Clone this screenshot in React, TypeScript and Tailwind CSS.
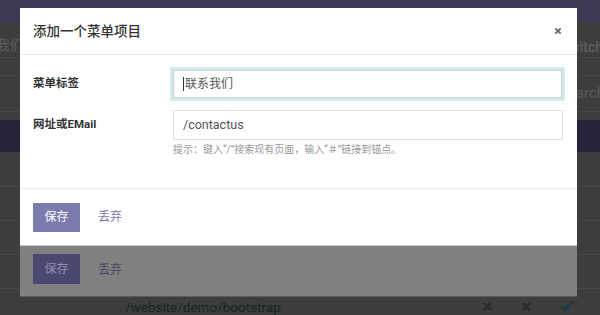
import React from "react";

const font = { fontFamily: "Roboto, 'Noto Sans CJK SC', 'Noto Sans', sans-serif" };

function XIcon({ className }: { className?: string }) {
  return (
    <svg viewBox="0 0 12 12" className={className}>
      <path d="M2 2 L10 10 M10 2 L2 10" stroke="currentColor" strokeWidth="2.6" strokeLinecap="butt" />
    </svg>
  );
}

function CheckIcon({ className }: { className?: string }) {
  return (
    <svg viewBox="0 0 14 12" className={className}>
      <path d="M1.5 6.5 L5 10 L12.5 1.5" stroke="currentColor" strokeWidth="2.6" fill="none" />
    </svg>
  );
}

export default function App() {
  return (
    <div className="relative w-[600px] h-[315px] overflow-hidden bg-[#3d3d3d]" style={font}>
      {/* background page (dimmed) */}
      <div className="flex flex-col">
        <div className="h-[22px] bg-[#3d3a56]" />
        <div className="h-[36px] flex items-center justify-between border-b border-[#474747]">
          <span className="ml-[-32px] mt-[12px] text-[14px] text-[#5e5e5e]">联系我们</span>
          <span className="mr-[-3px] mt-[16px] text-[14px] font-bold text-[#5a5a5a]">Switch</span>
        </div>
        <div className="h-[18px] border-b border-[#474747]" />
        <div className="h-[36px] flex items-center justify-end border-b border-[#474747]">
          <span className="mr-[-5px] text-[15px] text-[#5a5a5a]">Search</span>
        </div>
        <div className="h-[8px]" />
        <div className="h-[32px] bg-[#24233a]" />
        <div className="h-[35px] border-b border-[#474747]" />
        <div className="h-[34px] border-b border-[#474747]" />
        <div className="h-[34px] border-b border-[#474747]" />
        <div className="h-[34px] border-b border-[#474747]" />
        <div className="h-[25px] relative flex items-end">
          <span className="ml-[125px] mb-[-3px] text-[13.5px] leading-[20px] text-[#172626]">/website/demo/bootstrap</span>
          <div className="ml-auto mr-[26px] mb-[2px] flex items-center gap-[28px]">
            <XIcon className="w-[11px] h-[11px] text-[#2b2b2b]" />
            <XIcon className="w-[11px] h-[11px] text-[#2b2b2b]" />
            <CheckIcon className="w-[14px] h-[12px] text-[#153e47]" />
          </div>
        </div>
      </div>

      {/* modal stack */}
      <div className="absolute top-[8px] left-[20px] w-[557px] flex flex-col">
        <div className="bg-white h-[238px] flex flex-col border-b border-[#cfcfcf]">
          <div className="h-[47px] flex items-center justify-between px-[13px] border-b border-[#ececec]">
            <span className="text-[13.5px] font-medium text-[#333]">添加一个菜单项目</span>
            <XIcon className="w-[8px] h-[8px] text-[#666] mr-[2px] mb-[1px]" />
          </div>
          <div className="h-[133px] px-[13px] pt-[12px] flex flex-col">
            <div className="flex items-center">
              <span className="w-[137px] text-[11.5px] font-bold text-[#333]">菜单标签</span>
              <div className="flex-1 mr-[-1px] border-[3px] border-[#d2eceb]">
                <div className="h-[28px] border border-[#cfcfcf] bg-white flex items-center pl-[9px] text-[12px] text-[#555]">
                  <span className="w-px h-[14px] bg-[#333] mr-[1px]" />
                  联系我们
                </div>
              </div>
            </div>
            <div className="flex items-center mt-[9px]">
              <span className="w-[140px] text-[11.5px] font-bold text-[#333]">网址或EMail</span>
              <div className="flex-1 mr-[1px] h-[30px] border border-[#e2e2e2] flex items-center pl-[9px] text-[12.5px] text-[#555]">
                /contactus
              </div>
            </div>
            <div className="ml-[140px] mt-[4px] text-[10px] leading-[12px] text-[#999]">
              提示：键入“/”搜索现有页面，输入“＃”链接到锚点。
            </div>
          </div>
          <div className="flex-1 border-t border-[#eeeeee] px-[13px] flex items-center gap-[18px]">
            <div className="w-[47px] h-[29px] bg-[#7c7bad] flex items-center justify-center text-[12px] text-white">保存</div>
            <span className="text-[12px] text-[#7c7bad]">丢弃</span>
          </div>
        </div>
        <div className="h-[51px] bg-[#808080] px-[13px] pt-[8px] flex items-start gap-[18px] border-b border-[#5a5a5a]">
          <div className="w-[47px] h-[30px] bg-[#4a4870] flex items-center justify-center text-[12px] text-[#8f8dab]">保存</div>
          <span className="mt-[7px] text-[12px] text-[#4a4867]">丢弃</span>
        </div>
      </div>
    </div>
  );
}
